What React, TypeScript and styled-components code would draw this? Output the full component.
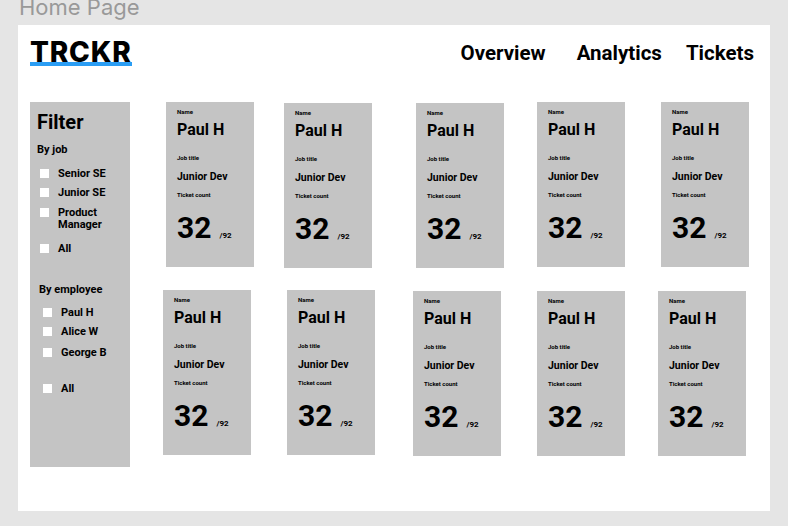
import React from "react";
import styled, { createGlobalStyle } from "styled-components";

const GlobalStyle = createGlobalStyle`
  body {
    margin: 0;
    background: #e5e5e5;
    font-family: Roboto, "Liberation Sans", sans-serif;
    color: #000;
  }
`;

const Page = styled.div`
  width: 788px;
  height: 526px;
  padding-left: 18px;
  box-sizing: border-box;
  overflow: hidden;
`;

const PageLabel = styled.div`
  height: 27px;
  margin-top: -2px;
  padding-left: 1px;
  font-family: Inter, "Noto Sans", sans-serif;
  font-size: 22px;
  line-height: 18px;
  color: #999;
`;

const Frame = styled.div`
  width: 752px;
  height: 486px;
  background: #fff;
  padding: 17px 16px 0 12px;
  box-sizing: border-box;
`;

const Header = styled.header`
  display: flex;
  align-items: flex-start;
  justify-content: space-between;
`;

const Logo = styled.div`
  display: inline-block;
  font-family: Inter, Roboto, sans-serif;
  font-size: 28px;
  font-weight: 800;
  letter-spacing: 0.8px;
  line-height: 20px;
  border-bottom: 4px solid #2a9df4;
`;

const Nav = styled.nav`
  display: flex;
  margin-top: -1px;
`;

const NavItem = styled.a<{ $ml: number }>`
  margin-left: ${(p) => p.$ml}px;
  font-size: 20.5px;
  font-weight: 700;
  line-height: 24px;
  color: #000;
  text-decoration: none;
`;

const Main = styled.div`
  display: flex;
  align-items: flex-start;
  margin-top: 36px;
`;

const Sidebar = styled.aside`
  width: 100px;
  height: 365px;
  background: #c4c4c4;
  padding: 8px 0 0 7px;
  box-sizing: border-box;
`;

const SidebarTitle = styled.h2`
  margin: 0;
  font-size: 20px;
  line-height: 24px;
  font-weight: 700;
`;

const GroupTitle = styled.div<{ $mt: number; $indent: number }>`
  margin-top: ${(p) => p.$mt}px;
  padding-left: ${(p) => p.$indent}px;
  font-size: 11px;
  line-height: 14px;
  font-weight: 700;
`;

const FilterItem = styled.label<{ $mt: number; $indent: number }>`
  display: flex;
  align-items: flex-start;
  gap: 9px;
  margin-top: ${(p) => p.$mt}px;
  padding-left: ${(p) => p.$indent}px;
  font-size: 11px;
  line-height: 12px;
  font-weight: 700;
`;

const Box = styled.span`
  flex: none;
  width: 9px;
  height: 9px;
  margin-top: 1px;
  background: #fff;
`;

const Cards = styled.div`
  display: grid;
  grid-template-columns: repeat(5, 88px);
  grid-auto-rows: 165px;
  column-gap: 36px;
  row-gap: 23px;
  margin-left: 34px;
`;

const Card = styled.div<{ $dx: number; $dy: number }>`
  width: 88px;
  height: 165px;
  margin-left: ${(p) => p.$dx}px;
  margin-top: ${(p) => p.$dy}px;
  background: #c4c4c4;
  padding: 6px 0 0 11px;
  box-sizing: border-box;
  display: flex;
  flex-direction: column;
`;

const Caption = styled.div<{ $mt: number }>`
  margin-top: ${(p) => p.$mt}px;
  font-size: 6px;
  line-height: 8px;
  font-weight: 700;
`;

const CardName = styled.div`
  margin-top: 4px;
  font-size: 16px;
  line-height: 20px;
  font-weight: 700;
`;

const CardJob = styled.div`
  margin-top: 8px;
  font-size: 10.5px;
  line-height: 14px;
  font-weight: 700;
`;

const CountRow = styled.div`
  display: flex;
  align-items: baseline;
  gap: 8px;
  margin-top: 14px;
`;

const Count = styled.span`
  font-size: 30px;
  line-height: 30px;
  font-weight: 700;
`;

const Total = styled.span`
  font-size: 8px;
  font-weight: 700;
`;

const jobs = [
  { label: ["Senior SE"], mt: 11 },
  { label: ["Junior SE"], mt: 7 },
  { label: ["Product", "Manager"], mt: 8 },
  { label: ["All"], mt: 12 },
];

const employees = [
  { label: ["Paul H"], mt: 10 },
  { label: ["Alice W"], mt: 7 },
  { label: ["George B"], mt: 9 },
  { label: ["All"], mt: 24 },
];

// small offsets, the cards in the mock aren't perfectly aligned
const nudges = [
  [2, 0], [-4, 1], [4, 1], [1, 0], [1, 0],
  [-1, 0], [-1, 0], [1, 1], [1, 1], [-2, 1],
];

function Filters({ items, indent }: { items: typeof jobs; indent: number }) {
  return (
    <>
      {items.map((item, i) => (
        <FilterItem key={i} $mt={item.mt} $indent={indent}>
          <Box />
          <span>
            {item.label.map((line, j) => (
              <React.Fragment key={j}>
                {j > 0 && <br />}
                {line}
              </React.Fragment>
            ))}
          </span>
        </FilterItem>
      ))}
    </>
  );
}

function EmployeeCard({ dx, dy }: { dx: number; dy: number }) {
  return (
    <Card $dx={dx} $dy={dy}>
      <Caption $mt={0}>Name</Caption>
      <CardName>Paul H</CardName>
      <Caption $mt={14}>Job title</Caption>
      <CardJob>Junior Dev</CardJob>
      <Caption $mt={7}>Ticket count</Caption>
      <CountRow>
        <Count>32</Count>
        <Total>/92</Total>
      </CountRow>
    </Card>
  );
}

export default function App() {
  return (
    <Page>
      <GlobalStyle />
      <PageLabel>Home Page</PageLabel>
      <Frame>
        <Header>
          <Logo>TRCKR</Logo>
          <Nav>
            <NavItem $ml={0}>Overview</NavItem>
            <NavItem $ml={31}>Analytics</NavItem>
            <NavItem $ml={24}>Tickets</NavItem>
          </Nav>
        </Header>
        <Main>
          <Sidebar>
            <SidebarTitle>Filter</SidebarTitle>
            <GroupTitle $mt={9} $indent={0}>By job</GroupTitle>
            <Filters items={jobs} indent={3} />
            <GroupTitle $mt={28} $indent={2}>By employee</GroupTitle>
            <Filters items={employees} indent={6} />
          </Sidebar>
          <Cards>
            {nudges.map(([dx, dy], i) => (
              <EmployeeCard key={i} dx={dx} dy={dy} />
            ))}
          </Cards>
        </Main>
      </Frame>
    </Page>
  );
}
